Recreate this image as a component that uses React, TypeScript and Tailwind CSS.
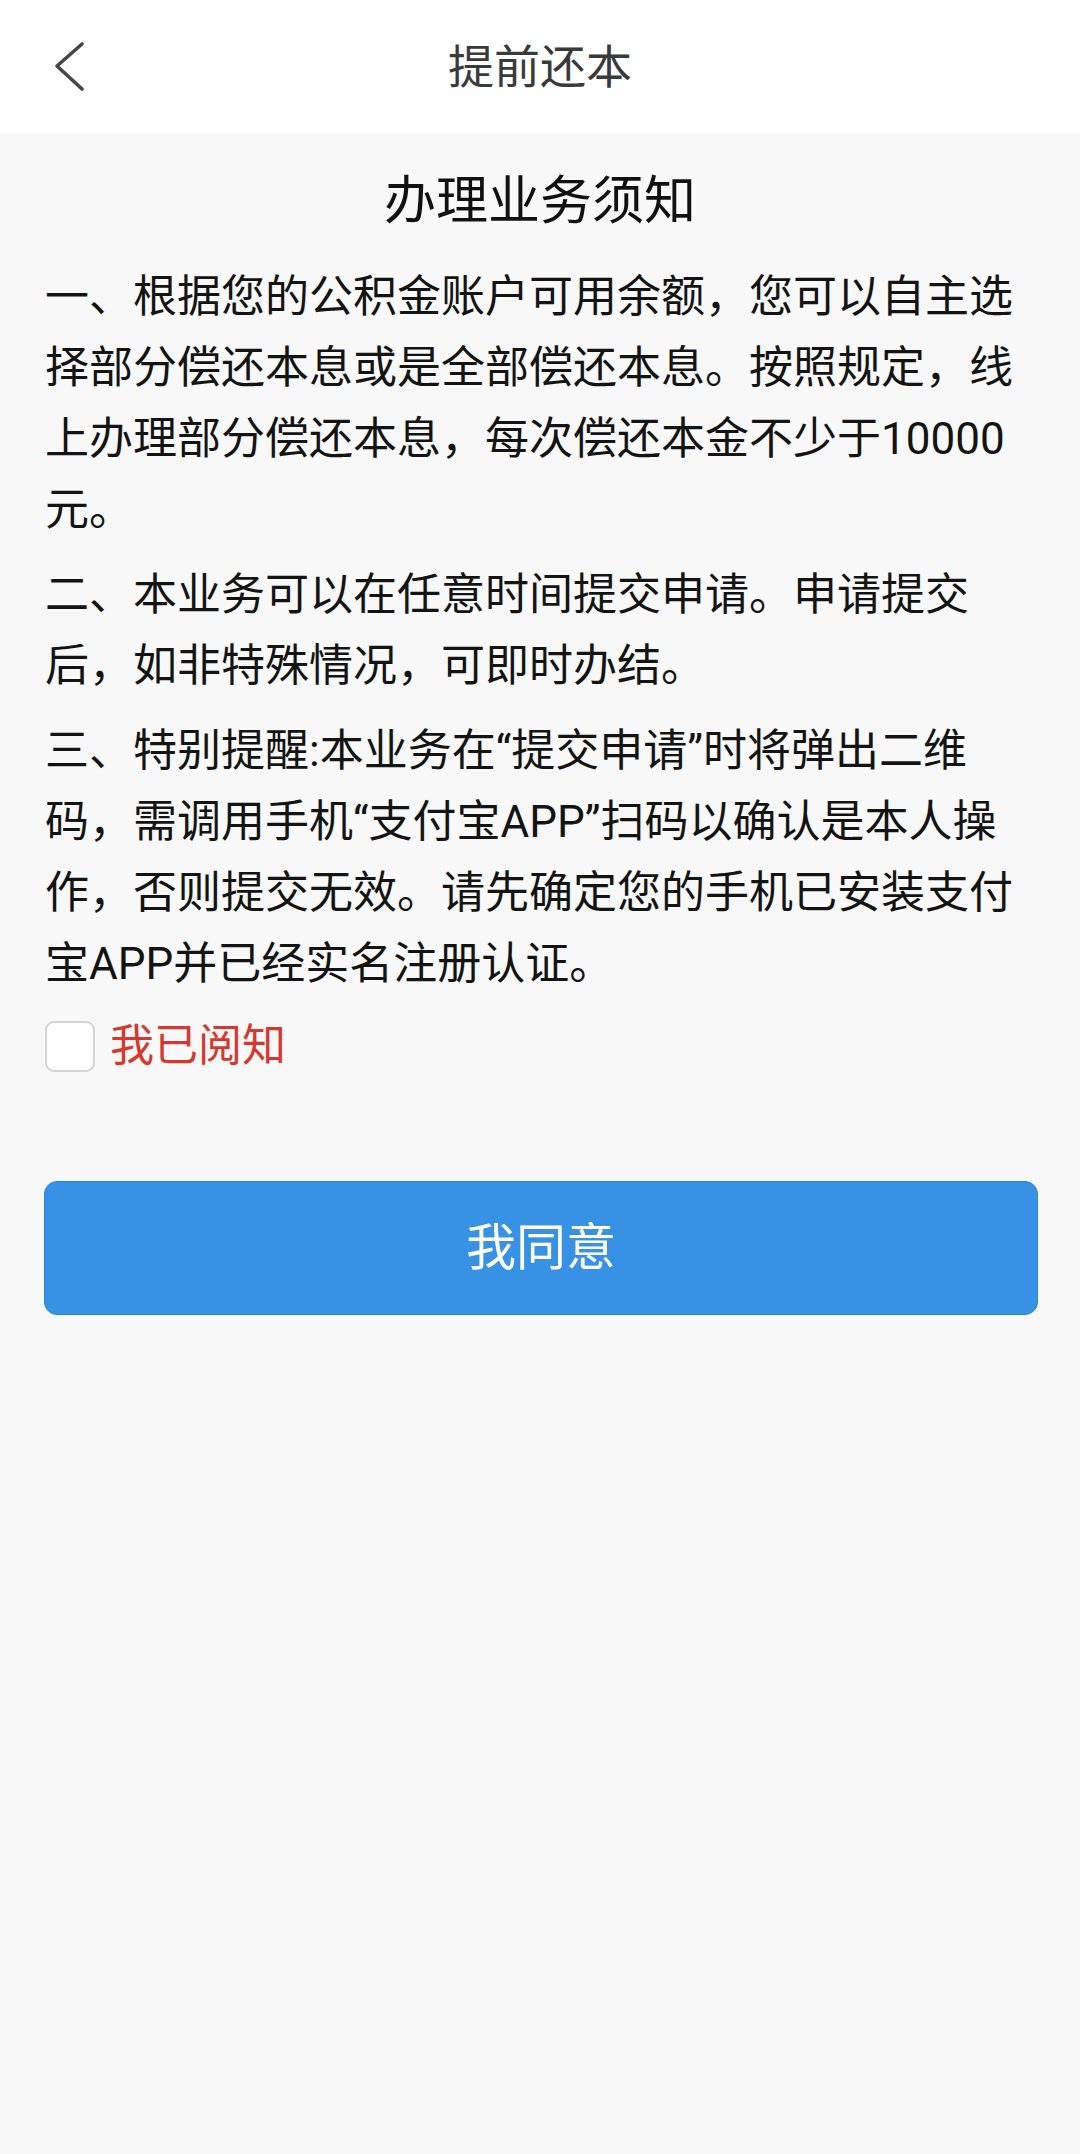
import React from "react";

export default function App() {
  return (
    <div className="min-h-[2154px] w-full bg-[#f8f8f8] font-['Roboto','Noto_Sans_CJK_SC',sans-serif] text-[#141414]">
      <header className="grid h-[133px] grid-cols-[1fr_auto_1fr] items-center bg-white">
        <div className="flex items-center pl-[54px]">
          <svg width="32" height="52" viewBox="0 0 32 52" fill="none">
            <polyline
              points="28,3 3,25 28,48"
              stroke="#474747"
              strokeWidth="3.6"
              strokeLinecap="round"
              strokeLinejoin="round"
            />
          </svg>
        </div>
        <h1 className="text-[46px] leading-[60px] font-normal text-[#3a3a3a]">提前还本</h1>
        <div />
      </header>

      <h2 className="mt-[34px] text-center text-[52px] leading-[70px] font-normal text-[#111]">办理业务须知</h2>

      <div className="mt-[25px] flex flex-col gap-[14px] px-[45px] text-[44px] leading-[71px]">
        <p>一、根据您的公积金账户可用余额，您可以自主选择部分偿还本息或是全部偿还本息。按照规定，线上办理部分偿还本息，每次偿还本金不少于10000元。</p>
        <p>二、本业务可以在任意时间提交申请。申请提交后，如非特殊情况，可即时办结。</p>
        <p>三、特别提醒:本业务在“提交申请”时将弹出二维码，需调用手机“支付宝APP”扫码以确认是本人操作，否则提交无效。请先确定您的手机已安装支付宝APP并已经实名注册认证。</p>
      </div>

      <label className="mt-[21px] ml-[45px] flex items-center gap-[15px]">
        <span className="h-[51px] w-[50px] rounded-[9px] border-2 border-[#d4d4d4] bg-white" />
        <span className="text-[44px] leading-[51px] text-[#d6382e]">我已阅知</span>
      </label>

      <button className="mt-[109px] ml-[44px] mr-[42px] flex h-[134px] w-[994px] items-center justify-center rounded-[13px] border border-[#2f82d2] bg-[#3792e5] text-[50px] text-white">
        我同意
      </button>
    </div>
  );
}
